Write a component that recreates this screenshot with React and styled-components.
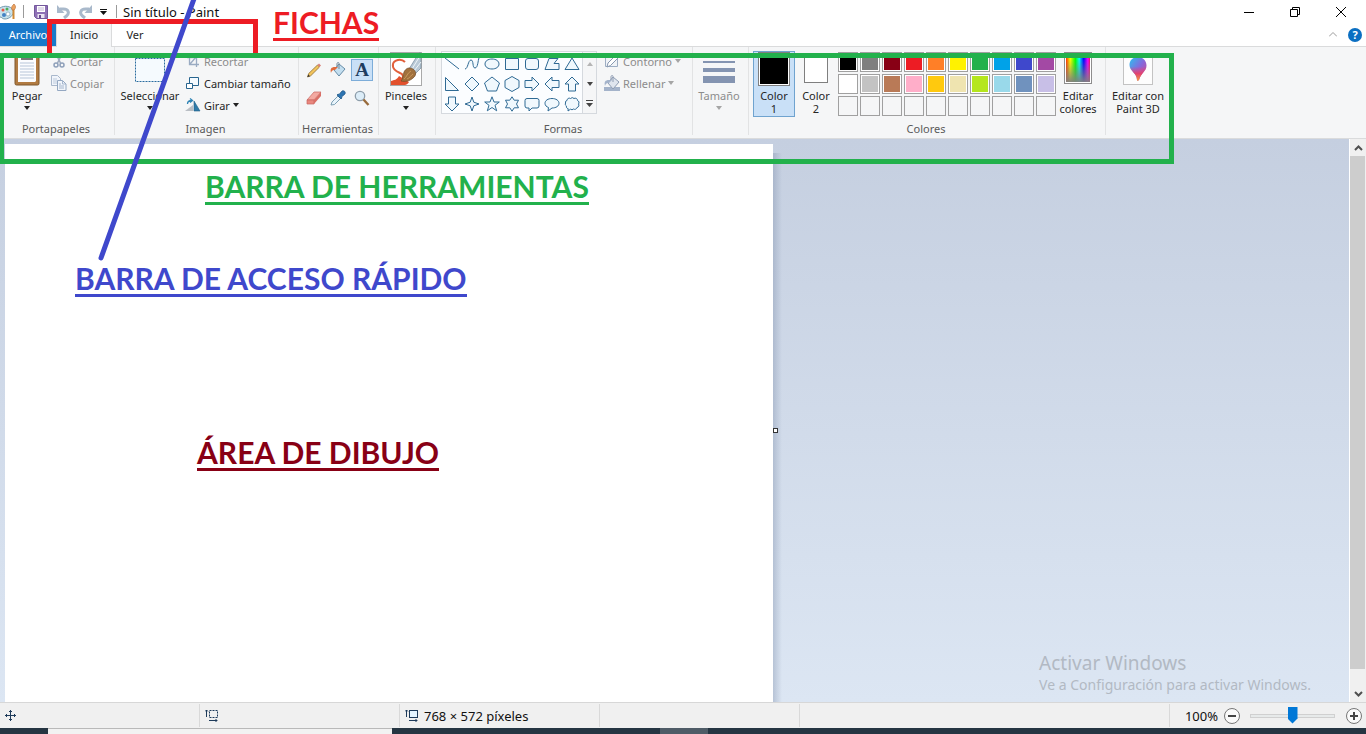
import React, { useState } from "react";
import styled, { createGlobalStyle, css } from "styled-components";

const Global = createGlobalStyle`
  * { box-sizing: border-box; }
  body {
    margin: 0;
    background: #fff;
    color: #262626;
    font-family: "Noto Sans", "Open Sans", sans-serif;
    font-size: 11px;
  }
  button, input {
    margin: 0;
    padding: 0;
    border: 0;
    background: none;
    color: inherit;
    font: inherit;
  }
  svg { display: block; flex: none; }
`;

const Window = styled.div`
  position: relative;
  display: flex;
  flex-direction: column;
  height: 100vh;
  overflow: hidden;
`;

/* ---------- title bar and tabs ---------- */

const TitleBar = styled.header`
  display: flex;
  align-items: center;
  height: 23px;
  flex: none;
  padding-right: 2px;
`;

const QuickAccess = styled.div`
  display: flex;
  align-items: center;
  flex: 1;
`;

const QuickButton = styled.button`
  display: flex;
  align-items: center;
  justify-content: center;
  width: ${(p) => p.$width || 22}px;
  height: 23px;
`;

const QuickDivider = styled.span`
  width: 1px;
  height: 13px;
  margin: 0 6px;
  background: #9a9a9a;
`;

const Title = styled.h1`
  margin: 0;
  color: #111;
  font-size: 13px;
  line-height: 20px;
  font-weight: 400;
`;

const WindowButton = styled.button`
  display: flex;
  align-items: center;
  justify-content: center;
  width: 46px;
  height: 20px;
`;

const TabBar = styled.nav`
  display: flex;
  align-items: stretch;
  height: 24px;
  flex: none;
  border-bottom: 1px solid #dadbdc;
`;

const Tab = styled.button`
  width: 46px;
  ${(p) =>
    p.$kind === "file" &&
    css`
      width: 56px;
      background: #1979ca;
      color: #fff;
    `}
  ${(p) =>
    p.$kind === "active" &&
    css`
      width: 56px;
      margin-bottom: -1px;
      padding-bottom: 2px;
      background: #f5f6f7;
      border: 1px solid #dadbdc;
      border-bottom: 0;
    `}
`;

const TabTools = styled.div`
  display: flex;
  align-items: center;
  gap: 11px;
  margin-left: auto;
  padding-right: 4px;
`;

const Help = styled.button`
  width: 14px;
  height: 14px;
  border-radius: 50%;
  background: #0b6fc2;
  color: #fff;
  font-size: 11px;
  line-height: 14px;
  font-weight: 700;
`;

/* ---------- ribbon ---------- */

const Ribbon = styled.div`
  display: flex;
  height: 92px;
  flex: none;
  background: #f5f6f7;
  border-bottom: 1px solid #dadbdc;
`;

const GroupBox = styled.section`
  display: flex;
  flex-direction: column;
  flex: none;
  width: ${(p) => p.$width}px;
  padding-top: 4px;
  border-right: 1px solid #e2e3e4;
  border-image: linear-gradient(#e2e3e4 96%, transparent 96%) 1;
  &:last-child { border: 0; }
`;

const GroupContent = styled.div`
  display: flex;
  align-items: flex-start;
  height: 70px;
  padding-left: ${(p) => p.$inset || 0}px;
`;

const GroupCaption = styled.h2`
  margin: 0;
  padding-right: 2px;
  color: #5a5a5a;
  font-size: 11px;
  line-height: 16px;
  font-weight: 400;
  text-align: center;
`;

const BigButton = styled.button`
  display: flex;
  flex-direction: column;
  align-items: center;
  flex: none;
  width: ${(p) => p.$width}px;
  height: 66px;
  border: 1px solid ${(p) => (p.$active ? "#6fa3cf" : "transparent")};
  background: ${(p) => (p.$active ? "#c9e0f7" : "none")};
  color: ${(p) => (p.$muted ? "#8c8c8c" : "#262626")};
  white-space: nowrap;
  line-height: 13px;
`;

const BigIcon = styled.span`
  display: flex;
  align-items: flex-end;
  justify-content: center;
  height: 37px;
  padding-bottom: ${(p) => p.$lift || 3}px;
`;

const SmallColumn = styled.div`
  display: flex;
  flex-direction: column;
  padding-left: ${(p) => p.$inset || 0}px;
`;

const SmallButton = styled.button`
  display: flex;
  align-items: center;
  gap: 3px;
  height: 22px;
  padding-bottom: 2px;
  color: ${(p) => (p.$muted ? "#8c8c8c" : "#262626")};
  white-space: nowrap;
`;

const ArrowSlot = styled.span`
  display: flex;
  align-items: center;
  justify-content: center;
  height: 12px;
`;

const ToolGrid = styled.div`
  display: grid;
  grid-template-columns: repeat(3, 22px);
  grid-auto-rows: 22px;
  gap: 6px 2px;
  padding-top: 8px;
`;

const ToolButton = styled.button`
  display: flex;
  align-items: center;
  justify-content: center;
  border: 1px solid ${(p) => (p.$active ? "#7dadd9" : "transparent")};
  background: ${(p) => (p.$active ? "#c9e0f7" : "none")};
`;

const TextGlyph = styled.span`
  color: #1e3c5f;
  font: 700 19px/20px "Liberation Serif", serif;
`;

const Gallery = styled.div`
  display: flex;
  height: 63px;
  margin-right: 7px;
  border: 1px solid #d5d9de;
  background: #fbfdff;
`;

const ShapeGrid = styled.div`
  display: grid;
  grid-template-columns: repeat(7, 20px);
  grid-auto-rows: 20px;
  padding-top: 2px;
`;

const ShapeButton = styled.button`
  display: flex;
  align-items: center;
  justify-content: center;
`;

const GalleryScroll = styled.div`
  display: flex;
  flex-direction: column;
  width: 14px;
  padding-top: 2px;
  border-left: 1px solid #d5d9de;
  background: #f5f6f7;
`;

const GalleryArrow = styled.button`
  display: flex;
  align-items: center;
  justify-content: center;
  height: 20px;
`;

const ColorChip = styled.span`
  width: ${(p) => p.$size}px;
  height: ${(p) => p.$size + 2}px;
  border: 1px solid #7f7f7f;
  background: ${(p) => p.$color};
  box-shadow: inset 0 0 0 1px #fff;
`;

const Palette = styled.div`
  display: grid;
  grid-template-columns: repeat(10, 20px);
  grid-auto-rows: 20px;
  gap: 2px;
  padding: 1px 0 0 1px;
`;

const Swatch = styled.button`
  border: 1px solid #a0a0a0;
  background: ${(p) => p.$color || "#f5f6f7"};
  box-shadow: inset 0 0 0 1px ${(p) => (p.$color ? "#fff" : "#f5f6f7")};
`;

const Spectrum = styled.span`
  width: 28px;
  height: 32px;
  border: 1px solid #8d8d8d;
  background:
    linear-gradient(transparent 20%, #808080),
    linear-gradient(90deg, #f00, #ff0 20%, #0f0 40%, #0ff 55%, #00f 72%, #f0f 88%, #f00);
  box-shadow: inset 0 0 0 1px #fff;
`;

const Frame = styled.span`
  display: flex;
  align-items: center;
  justify-content: center;
  width: 30px;
  height: 32px;
  border: 1px solid #c3c3c3;
  background: #fdfdfd;
`;

/* ---------- drawing area ---------- */

const Workspace = styled.main`
  display: flex;
  flex: 1;
  min-height: 0;
  background: linear-gradient(#c5cfe0, #dce6f3);
`;

const Viewport = styled.div`
  flex: 1;
  min-width: 0;
  padding: 5px;
  overflow: hidden;
`;

const Paper = styled.div`
  position: relative;
  width: 768px;
  height: 572px;
  background: #fff;
  &::after {
    content: "";
    position: absolute;
    top: 9px;
    bottom: 0;
    left: 100%;
    width: 9px;
    background: linear-gradient(90deg, #8090ab66, transparent);
  }
`;

const Handle = styled.span`
  position: absolute;
  z-index: 1;
  top: 50%;
  left: 100%;
  width: 5px;
  height: 5px;
  margin-top: -2px;
  border: 1px solid #333;
  background: #fff;
`;

const ScrollBar = styled.div`
  display: flex;
  flex-direction: column;
  width: 17px;
  background: #f0f0f0;
  border-left: 1px solid #fff;
`;

const ScrollArrow = styled.button`
  display: flex;
  align-items: center;
  justify-content: center;
  height: 17px;
`;

const ScrollTrack = styled.div`
  flex: 1;
  padding-right: 1px;
`;

const ScrollThumb = styled.div`
  height: 97%;
  background: #cdcdcd;
`;

/* ---------- status bar ---------- */

const StatusBar = styled.footer`
  display: flex;
  align-items: center;
  height: 26px;
  flex: none;
  border-top: 1px solid #d7d7d7;
  background: #f0f0f0;
  color: #111;
  font-size: 13px;
`;

const StatusCell = styled.div`
  display: flex;
  align-items: center;
  gap: 6px;
  width: ${(p) => (p.$fill ? "auto" : "200px")};
  flex: ${(p) => (p.$fill ? 1 : "none")};
  height: 23px;
  padding-left: 5px;
  border-right: 1px solid #d9d9d9;
`;

const Zoom = styled.div`
  display: flex;
  align-items: center;
  gap: 6px;
  padding: 0 4px 0 15px;
`;

const ZoomButton = styled.button`
  width: 16px;
  height: 16px;
`;

const Slider = styled.input`
  appearance: none;
  width: 85px;
  height: 16px;
  margin: 0 5px 0 4px;
  &::-webkit-slider-runnable-track {
    height: 4px;
    border: 1px solid #d0d0d0;
    background: #e7eaea;
  }
  &::-webkit-slider-thumb {
    appearance: none;
    width: 10px;
    height: 17px;
    margin-top: -8px;
    background: #0078d7;
    clip-path: polygon(0 0, 100% 0, 100% 70%, 50% 100%, 0 70%);
  }
`;

const Taskbar = styled.div`
  display: flex;
  height: 6px;
  flex: none;
  padding-left: 48px;
  background: #253542;
`;

const TaskSearch = styled.div`
  width: 344px;
  border-top: 1px solid #b9b9b9;
  background: #f2f2f2;
`;

const TaskItem = styled.div`
  width: 48px;
  margin-left: 268px;
  background: #4f5c67;
`;

/* ---------- annotations over the window ---------- */

const Outline = styled.div`
  position: absolute;
  top: ${(p) => p.$top}px;
  left: ${(p) => p.$left}px;
  width: ${(p) => p.$width}px;
  height: ${(p) => p.$height}px;
  border: 5px solid ${(p) => p.$color};
  border-bottom-width: ${(p) => (p.$open ? 0 : 5)}px;
  pointer-events: none;
`;

const Note = styled.p`
  position: absolute;
  top: ${(p) => p.$top}px;
  left: ${(p) => p.$left}px;
  margin: 0;
  border-bottom: 3px solid;
  color: ${(p) => p.$color};
  font: 700 30px/32px Lato, sans-serif;
  white-space: nowrap;
`;

const Pointer = styled.svg`
  position: absolute;
  top: 0;
  left: 0;
  pointer-events: none;
`;

const Watermark = styled.div`
  position: absolute;
  right: 55px;
  bottom: 39px;
  color: #b2b9c3;
  font-size: 14px;
  line-height: 20px;
  strong {
    display: block;
    font-size: 19px;
    line-height: 24px;
    font-weight: 400;
  }
`;

/* ---------- drawings ---------- */

const Caret = ({ up, color = "#222" }) => (
  <svg width="6" height="4" viewBox="0 0 6 4">
    <path d={up ? "M0 4h6L3 0z" : "M0 0h6L3 4z"} fill={color} />
  </svg>
);

const Icon = ({ size = 16, children }) => (
  <svg width={size} height={size} viewBox="0 0 16 16" fill="none">{children}</svg>
);

const PaintLogo = () => (
  <svg width="17" height="20" viewBox="0 0 17 20" fill="none">
    <path d="M0 6C4 3 11 4 13 8c2 5-4 9-8 9-3 0-3-2-5-2" fill="#c7e2ed" stroke="#7299ad" />
    <circle cx="3" cy="8" r="1.5" fill="#e65b45" />
    <circle cx="7" cy="7" r="1.5" fill="#4eae59" />
    <circle cx="4" cy="13" r="2" fill="#4382c4" />
    <circle cx="8" cy="12" r="2" fill="#fff" stroke="#7299ad" strokeWidth=".6" />
    <path d="M13.500 7v10" stroke="#d08a35" strokeWidth="2" />
    <path d="M12 8c-1-3 0-4 2-6 2 2 2 4 0 6z" fill="#eda35f" stroke="#bb7540" strokeWidth=".7" />
  </svg>
);

const SaveIcon = () => (
  <Icon>
    <path d="M1.500 1.500h13v13h-11l-2-2z" fill="#8e70b5" stroke="#73579c" />
    <path d="M4 2h8v6H4z" fill="#fff" />
    <path d="M5 4h6M5 6h6" stroke="#c2b5d5" />
    <path d="M4.500 10h7v4h-7z" fill="#e9e3f1" />
    <path d="M6 11h2v3H6z" fill="#664990" />
  </Icon>
);

const UndoIcon = ({ flip }) => (
  <svg width="15" height="15" viewBox="0 0 15 15" fill="none">
    <g transform={flip ? "matrix(-1 0 0 1 15 0)" : undefined}>
      <path d="M4 5h3.500c5.500 0 6 4.500 3 7l-2.500 2" stroke="#a9b9cb" strokeWidth="3" />
      <path d="M1 1v8h7.500z" fill="#a9b9cb" />
    </g>
  </svg>
);

const PasteIcon = () => (
  <svg width="26" height="34" viewBox="0 0 26 34">
    <rect x="1" y="2" width="24" height="31" rx="1.500" fill="#b17b42" stroke="#7e582f" />
    <path d="M4 5h18v24l-1 1H4z" fill="#fbfcfe" />
    <path d="M6 11h14M6 14h14M6 17h14M6 20h14M6 23h14M6 26h14" stroke="#b7c5d8" />
    <path d="M7 3h12v5H7z" fill="#777" />
  </svg>
);

const ScissorsIcon = () => (
  <Icon>
    <path d="M5 1l4.500 9M11 1L6.500 10" stroke="#9daabd" strokeWidth="1.600" />
    <circle cx="5" cy="12" r="2" stroke="#8ea0ba" strokeWidth="1.500" />
    <circle cx="11" cy="12" r="2" stroke="#8ea0ba" strokeWidth="1.500" />
  </Icon>
);

const CopyIcon = () => (
  <Icon>
    <path d="M.5.500h6l3 3v7h-9z" fill="#f1f5fb" stroke="#a9b8cc" />
    <path d="M2 4h4M2 6h4M2 8h4" stroke="#bdcbdd" />
    <path d="M6.500 5.500h5l3.500 3.500v6.500H6.500z" fill="#f1f5fb" stroke="#94a8c2" />
    <path d="M11.500 5.500V9H15M8 9h2M8 11h5M8 13h5" stroke="#a5b7ce" />
  </Icon>
);

const SelectIcon = () => (
  <svg width="32" height="26" viewBox="0 0 32 26">
    <rect x="1.500" y="1.500" width="29" height="23" fill="#f5fafe" stroke="#2a6c9f" strokeDasharray="2 1" />
  </svg>
);

const CropIcon = () => (
  <Icon>
    <path d="M4.500 1v10.500H14M2 4.500h9.500V14M5 11l7-8" stroke="#9aabc2" strokeWidth="1.300" />
  </Icon>
);

const ResizeIcon = () => (
  <Icon>
    <path d="M4.500 2.500h9v8h-9z" fill="#f4faff" stroke="#28658f" />
    <path d="M1.500 8.500h6v5h-6z" fill="#fff" stroke="#28658f" />
  </Icon>
);

const RotateIcon = () => (
  <Icon>
    <path d="M0 14h8V8z" fill="#b9bec4" />
    <path d="M9 14V4l6 10z" fill="#2f7ba8" stroke="#1e5f88" strokeWidth=".6" />
    <path d="M2.500 7C2.500 4 4 3.500 7 3.500M5 1.500l2.500 2L5 5.500" stroke="#3084b5" strokeWidth="1.300" />
  </Icon>
);

const PencilIcon = () => (
  <Icon>
    <path d="M1.500 15l1.200-3.500L11.500 3l2 2-8.800 8.800z" fill="#f2c45c" stroke="#8f6d31" strokeWidth=".8" />
    <path d="M11.500 3l1.500-1.500 2 2L13.500 5z" fill="#d98077" />
    <path d="M1.500 15l.8-2.500 1.700 1.700z" fill="#333" />
  </Icon>
);

const BucketIcon = ({ muted }) => (
  <Icon>
    {muted && <path d="M0 12h16v4H0z" fill="#a4b3ca" />}
    <path d="M4 8l5-6 6 5-6 7z" fill={muted ? "#dfe5ee" : "#c4dff0"} stroke={muted ? "#8e9cb2" : "#668ca7"} />
    <path d="M9 7V1.500C9 0 7 0 7 2v3" stroke={muted ? "#8e9cb2" : "#718796"} />
    <path d="M5 5C1 5 0 7 1 11c1-3 2-3 4-3l3-3z" fill={muted ? "#a4b3ca" : "#e06a3c"} />
  </Icon>
);

const EraserIcon = () => (
  <Icon>
    <path d="M1 10l7-8h7l-7 8z" fill="#f3a9a1" stroke="#c8665e" strokeWidth=".7" />
    <path d="M1 10h7v4H1z" fill="#e9877e" stroke="#c8665e" strokeWidth=".7" />
    <path d="M8 10l7-8v4l-7 8z" fill="#d96f66" />
  </Icon>
);

const PickerIcon = () => (
  <Icon>
    <path d="M1 15l1-3 6-6 2.500 2.500-6 6z" fill="#e8f4fb" stroke="#6f96ad" strokeWidth=".9" />
    <path d="M7 5l4 4 1-1-.5-1L15 4c1-2-1-4-3-3L9 4.500 8 4z" fill="#2d74b1" stroke="#1d5384" strokeWidth=".7" />
  </Icon>
);

const LensIcon = () => (
  <Icon>
    <circle cx="6" cy="6" r="4.700" fill="#dcedf8" stroke="#8d9daa" strokeWidth="1.300" />
    <path d="M9.500 9.500l5 5.500" stroke="#986b3c" strokeWidth="2.400" />
  </Icon>
);

const BrushIcon = () => (
  <svg width="32" height="34" viewBox="0 0 32 34" fill="none">
    <rect x=".5" y=".5" width="31" height="33" fill="#fff" stroke="#a9a9a9" />
    <path d="M1 33v-4c3-1 6-1 8-5l10 6c-1 2-3 3-4 3z" fill="#e2512d" />
    <path d="M15 10C11 6 4 8 3 12c-1 5 3 7 7 9 3 1 4 4 2 7" stroke="#e2603b" strokeWidth="2" />
    <path d="M19 17L29 1h2v15l-6 6z" fill="#b9c9d6" stroke="#71879a" strokeWidth=".7" />
    <path d="M22 17l8-13M24 19l7-9" stroke="#eef4f8" />
    <path d="M11 29c2-2 2-6 3-9 2-4 5-5 9-3 4 3 3 7 0 9-3 3-8 4-12 3z" fill="#a1713e" stroke="#734a24" strokeWidth=".7" />
    <path d="M14 27c3-2 3-6 7-8M17 27c3-1 4-4 6-5" stroke="#c9985d" />
  </svg>
);

const OutlineIcon = () => (
  <Icon>
    <path d="M1.500 1.500h12v12h-12z" fill="#f0f3f7" stroke="#9dadc3" />
    <path d="M3 14l1-4 9-9 2.500 2.500-9 9z" fill="#fff" stroke="#8798b0" />
  </Icon>
);

const SizeIcon = () => (
  <svg width="32" height="26" viewBox="0 0 32 26" fill="#8494b1">
    <path d="M0 4h32v2H0zM0 11h32v4H0zM0 19h32v7H0z" />
  </svg>
);

const Paint3dIcon = () => (
  <svg width="20" height="28" viewBox="0 0 20 28">
    <defs>
      <linearGradient id="drop" x1="0" y1="0" x2="1" y2="1">
        <stop offset="0" stopColor="#28c3f0" />
        <stop offset=".5" stopColor="#8469dd" />
        <stop offset="1" stopColor="#e3427f" />
      </linearGradient>
      <linearGradient id="tip" x1="0" y1="0" x2="0" y2="1">
        <stop offset=".4" stopColor="#e8427f" stopOpacity="0" />
        <stop offset=".7" stopColor="#e2426e" />
        <stop offset="1" stopColor="#f59b3b" />
      </linearGradient>
    </defs>
    <path d="M10 2c5 0 8.500 4 8.500 8.500 0 6-5 6.500-7.500 14.500-1 1-2 1-2 0C9 18 1.500 16 1.500 10 1.500 5 5 2 10 2z" fill="url(#drop)" />
    <path d="M10 2c5 0 8.500 4 8.500 8.500 0 6-5 6.500-7.500 14.500-1 1-2 1-2 0C9 18 1.500 16 1.500 10 1.500 5 5 2 10 2z" fill="url(#tip)" />
  </svg>
);

const MoveIcon = () => (
  <svg width="11" height="11" viewBox="0 0 11 11" fill="none" stroke="#1d3a5a">
    <path d="M5.500 0v11M0 5.500h11M4 2l1.500-1.500L7 2M4 9l1.500 1.500L7 9M2 4L.5 5.500 2 7M9 4l1.500 1.500L9 7" />
  </svg>
);

const ExtentIcon = ({ dashed }) => (
  <svg width="13" height="13" viewBox="0 0 13 13" fill="none" stroke="#1d3a5a">
    <path d="M1.500 1v7M0 2.500L1.500 1 3 2.500M4 11.500h8M10.500 10l1.500 1.500-1.500 1.500" />
    <rect x="4.500" y="1.500" width="8" height="7" fill={dashed ? "none" : "#e4f4ff"} strokeDasharray={dashed ? "2 1" : undefined} />
  </svg>
);

const ZoomIcon = ({ d }) => (
  <Icon>
    <circle cx="8" cy="8" r="7.500" fill="#fafafa" stroke="#777" />
    <path d={d} stroke="#444" strokeWidth="2" />
  </Icon>
);

const shapes = [
  ["Línea", "M1 2l14 11"],
  ["Curva", "M1 13c3 0 3-9 6-9s1 8 4 8 3-8 4-10"],
  ["Óvalo", "M8 3c4 0 7 2 7 5s-3 5-7 5-7-2-7-5 3-5 7-5z"],
  ["Rectángulo", "M1.500 2.500h13v11h-13z"],
  ["Rectángulo redondeado", "M4 2.500h8q2.500 0 2.500 2.500v6q0 2.500-2.500 2.500H4q-2.500 0-2.500-2.500V5q0-2.500 2.500-2.500z"],
  ["Polígono", "M5 2.500h9l-4 5h5v6H1z"],
  ["Triángulo", "M8 2l7 11.500H1z"],
  ["Triángulo rectángulo", "M1.500 1.500v13h13z"],
  ["Rombo", "M8 1l7 7-7 7-7-7z"],
  ["Pentágono", "M8 1l7.500 6-3 8h-9l-3-8z"],
  ["Hexágono", "M8 .5l7 4v7l-7 4-7-4v-7z"],
  ["Flecha derecha", "M1 4.500h7V1l7 7-7 7v-3.500H1z"],
  ["Flecha izquierda", "M15 4.500H8V1L1 8l7 7v-3.500h7z"],
  ["Flecha arriba", "M4.500 15V8H1l7-7 7 7h-3.500v7z"],
  ["Flecha abajo", "M4.500 1v7H1l7 7 7-7h-3.500V1z"],
  ["Estrella de cuatro puntas", "M8 1l1.800 5.200L15 8l-5.200 1.800L8 15l-1.800-5.200L1 8l5.200-1.800z"],
  ["Estrella de cinco puntas", "M8 .8l2 5.200h5.300L11 9.300l1.700 5.500L8 11.500l-4.700 3.300L5 9.300.7 6H6z"],
  ["Estrella de seis puntas", "M8 .8l2.200 3.400h4.300L12.500 8l2 3.800h-4.300L8 15.200l-2.200-3.400H1.500L3.500 8l-2-3.800h4.300z"],
  ["Globo rectangular", "M3 2.500h10q2 0 2 2V10q0 2-2 2H8l-3 3v-3H3q-2 0-2-2V4.500q0-2 2-2z"],
  ["Globo ovalado", "M8 2.500c4 0 7 2 7 4.800S12 12 8 12l-4 3 .5-3.500C2.500 10.800 1 9.500 1 7.300 1 4.500 4 2.500 8 2.500z"],
  ["Globo nube", "M3 4.500a2.300 2.300 0 0 1 3.500-2 2.400 2.400 0 0 1 3.500 0 2.300 2.300 0 0 1 3.500 2 2.200 2.200 0 0 1 1 3.500 2.200 2.200 0 0 1-1.500 3.500 2.300 2.300 0 0 1-3.500 1.500 2.200 2.200 0 0 1-3 .2L4 15l.2-2.300A2 2 0 0 1 2.500 10 2.200 2.200 0 0 1 1.500 7 2 2 0 0 1 3 4.500z"],
];

const palette = [
  "#000000", "#7f7f7f", "#880015", "#ed1c24", "#ff7f27", "#fff200", "#22b14c", "#00a2e8", "#3f48cc", "#a349a4",
  "#ffffff", "#c3c3c3", "#b97a57", "#ffaec9", "#ffc90e", "#efe4b0", "#b5e61d", "#99d9ea", "#7092be", "#c8bfe7",
  null, null, null, null, null, null, null, null, null, null,
];

const Group = ({ width, caption, inset, children }) => (
  <GroupBox $width={width}>
    <GroupContent $inset={inset}>{children}</GroupContent>
    {caption && <GroupCaption>{caption}</GroupCaption>}
  </GroupBox>
);

const Big = ({ width, icon, label, second, arrow, muted, active, lift }) => (
  <BigButton $width={width} $muted={muted} $active={active}>
    <BigIcon $lift={lift}>{icon}</BigIcon>
    <span>{label}</span>
    {second && <span>{second}</span>}
    {arrow && <ArrowSlot><Caret color={muted ? "#a5a5a5" : undefined} /></ArrowSlot>}
  </BigButton>
);

const Small = ({ icon, label, arrow, muted }) => (
  <SmallButton $muted={muted}>
    {icon}
    <span>{label}</span>
    {arrow && <Caret color={muted ? "#a5a5a5" : undefined} />}
  </SmallButton>
);

export default function App() {
  const [zoom, setZoom] = useState(50);
  return (
    <Window>
      <Global />
      <TitleBar>
        <QuickAccess>
          <PaintLogo />
          <QuickDivider />
          <QuickButton aria-label="Guardar"><SaveIcon /></QuickButton>
          <QuickButton aria-label="Deshacer"><UndoIcon /></QuickButton>
          <QuickButton aria-label="Rehacer"><UndoIcon flip /></QuickButton>
          <QuickButton $width={14} aria-label="Personalizar barra">
            <svg width="7" height="6" viewBox="0 0 7 6"><path d="M0 0h7v1H0zM0 2h7L3.500 6z" fill="#111" /></svg>
          </QuickButton>
          <QuickDivider />
          <Title>Sin título - Paint</Title>
        </QuickAccess>
        <WindowButton aria-label="Minimizar">
          <svg width="10" height="10" viewBox="0 0 10 10"><path d="M0 5h10v1H0z" /></svg>
        </WindowButton>
        <WindowButton aria-label="Restaurar">
          <svg width="10" height="10" viewBox="0 0 10 10" fill="none" stroke="#000"><path d="M.5 2.500h7v7h-7zM2.500 2.500v-2h7v7h-2" /></svg>
        </WindowButton>
        <WindowButton aria-label="Cerrar">
          <svg width="10" height="10" viewBox="0 0 10 10" fill="none" stroke="#000"><path d="M0 0l10 10M10 0L0 10" /></svg>
        </WindowButton>
      </TitleBar>
      <TabBar>
        <Tab $kind="file">Archivo</Tab>
        <Tab $kind="active">Inicio</Tab>
        <Tab>Ver</Tab>
        <TabTools>
          <button aria-label="Minimizar la cinta">
            <svg width="8" height="5" viewBox="0 0 8 5" fill="none" stroke="#9a9a9a"><path d="M0 4.500l4-4 4 4" /></svg>
          </button>
          <Help aria-label="Ayuda">?</Help>
        </TabTools>
      </TabBar>

      <Ribbon>
        <Group width={115} caption="Portapapeles" inset={4}>
          <Big width={46} icon={<PasteIcon />} label="Pegar" arrow />
          <SmallColumn $inset={1}>
            <Small icon={<ScissorsIcon />} label="Cortar" muted />
            <Small icon={<CopyIcon />} label="Copiar" muted />
          </SmallColumn>
        </Group>
        <Group width={184} caption="Imagen" inset={4}>
          <Big width={62} icon={<SelectIcon />} lift={6} label="Seleccionar" arrow />
          <SmallColumn $inset={4}>
            <Small icon={<CropIcon />} label="Recortar" muted />
            <Small icon={<ResizeIcon />} label="Cambiar tamaño" />
            <Small icon={<RotateIcon />} label="Girar" arrow />
          </SmallColumn>
        </Group>
        <Group width={80} caption="Herramientas" inset={4}>
          <ToolGrid>
            <ToolButton aria-label="Lápiz"><PencilIcon /></ToolButton>
            <ToolButton aria-label="Relleno"><BucketIcon /></ToolButton>
            <ToolButton $active aria-label="Texto"><TextGlyph>A</TextGlyph></ToolButton>
            <ToolButton aria-label="Borrador"><EraserIcon /></ToolButton>
            <ToolButton aria-label="Selector de color"><PickerIcon /></ToolButton>
            <ToolButton aria-label="Lupa"><LensIcon /></ToolButton>
          </ToolGrid>
        </Group>
        <Group width={57} inset={2}>
          <Big width={50} icon={<BrushIcon />} label="Pinceles" arrow />
        </Group>
        <Group width={257} caption="Formas" inset={5}>
          <Gallery>
            <ShapeGrid>
              {shapes.map(([name, d]) => (
                <ShapeButton key={name} aria-label={name}>
                  <Icon><path d={d} fill="#f0f8fd" stroke="#2f6a94" /></Icon>
                </ShapeButton>
              ))}
            </ShapeGrid>
            <GalleryScroll>
              <GalleryArrow aria-label="Formas anteriores"><Caret up color="#b5b5b5" /></GalleryArrow>
              <GalleryArrow aria-label="Formas siguientes"><Caret color="#444" /></GalleryArrow>
              <GalleryArrow aria-label="Todas las formas">
                <svg width="7" height="7" viewBox="0 0 7 7"><path d="M0 0h7v1H0zM0 3h7L3.500 7z" fill="#444" /></svg>
              </GalleryArrow>
            </GalleryScroll>
          </Gallery>
          <SmallColumn>
            <Small icon={<OutlineIcon />} label="Contorno" arrow muted />
            <Small icon={<BucketIcon muted />} label="Rellenar" arrow muted />
          </SmallColumn>
        </Group>
        <Group width={56} inset={3}>
          <Big width={46} icon={<SizeIcon />} lift={6} label="Tamaño" arrow muted />
        </Group>
        <Group width={357} caption="Colores" inset={4}>
          <Big width={42} icon={<ColorChip $size={32} $color="#000" />} label="Color" second="1" active />
          <Big width={42} icon={<ColorChip $size={24} $color="#fff" />} lift={6} label="Color" second="2" />
          <Palette>
            {palette.map((color, i) => (
              <Swatch key={i} $color={color} aria-label={color || "Color vacío"} />
            ))}
          </Palette>
          <Big width={44} icon={<Spectrum />} lift={5} label="Editar" second="colores" />
        </Group>
        <Group width={66} inset={2}>
          <Big width={60} icon={<Frame><Paint3dIcon /></Frame>} lift={4} label="Editar con" second="Paint 3D" />
        </Group>
      </Ribbon>

      <Workspace>
        <Viewport>
          <Paper>
            <Handle />
          </Paper>
        </Viewport>
        <ScrollBar>
          <ScrollArrow aria-label="Subir">
            <svg width="9" height="6" viewBox="0 0 9 6" fill="none" stroke="#505050" strokeWidth="2"><path d="M1 5l3.500-3.500L8 5" /></svg>
          </ScrollArrow>
          <ScrollTrack><ScrollThumb /></ScrollTrack>
          <ScrollArrow aria-label="Bajar">
            <svg width="9" height="6" viewBox="0 0 9 6" fill="none" stroke="#505050" strokeWidth="2"><path d="M1 1l3.500 3.500L8 1" /></svg>
          </ScrollArrow>
        </ScrollBar>
      </Workspace>

      <StatusBar>
        <StatusCell><MoveIcon /></StatusCell>
        <StatusCell><ExtentIcon dashed /></StatusCell>
        <StatusCell><ExtentIcon />768 × 572 píxeles</StatusCell>
        <StatusCell />
        <StatusCell $fill />
        <Zoom>
          <label htmlFor="zoom">100%</label>
          <ZoomButton aria-label="Alejar"><ZoomIcon d="M4 8h8" /></ZoomButton>
          <Slider id="zoom" type="range" value={zoom} onChange={(e) => setZoom(+e.target.value)} />
          <ZoomButton aria-label="Acercar"><ZoomIcon d="M4 8h8M8 4v8" /></ZoomButton>
        </Zoom>
      </StatusBar>
      <Taskbar>
        <TaskSearch />
        <TaskItem />
      </Taskbar>

      <Watermark>
        <strong>Activar Windows</strong>
        Ve a Configuración para activar Windows.
      </Watermark>
      <Outline $top={19} $left={47} $width={211} $height={36} $color="#ed1c24" $open />
      <Outline $top={53} $left={-1} $width={1175} $height={111} $color="#22b14c" />
      <Note $top={6} $left={273} $color="#ed1c24">FICHAS</Note>
      <Note $top={170} $left={205} $color="#22b14c">BARRA DE HERRAMIENTAS</Note>
      <Note $top={262} $left={75} $color="#3f48cc">BARRA DE ACCESO RÁPIDO</Note>
      <Note $top={436} $left={197} $color="#880015">ÁREA DE DIBUJO</Note>
      <Pointer width="200" height="264" viewBox="0 0 200 264">
        <path d="M195 -4L101 258" stroke="#3f48cc" strokeWidth="5" strokeLinecap="round" />
      </Pointer>
    </Window>
  );
}
